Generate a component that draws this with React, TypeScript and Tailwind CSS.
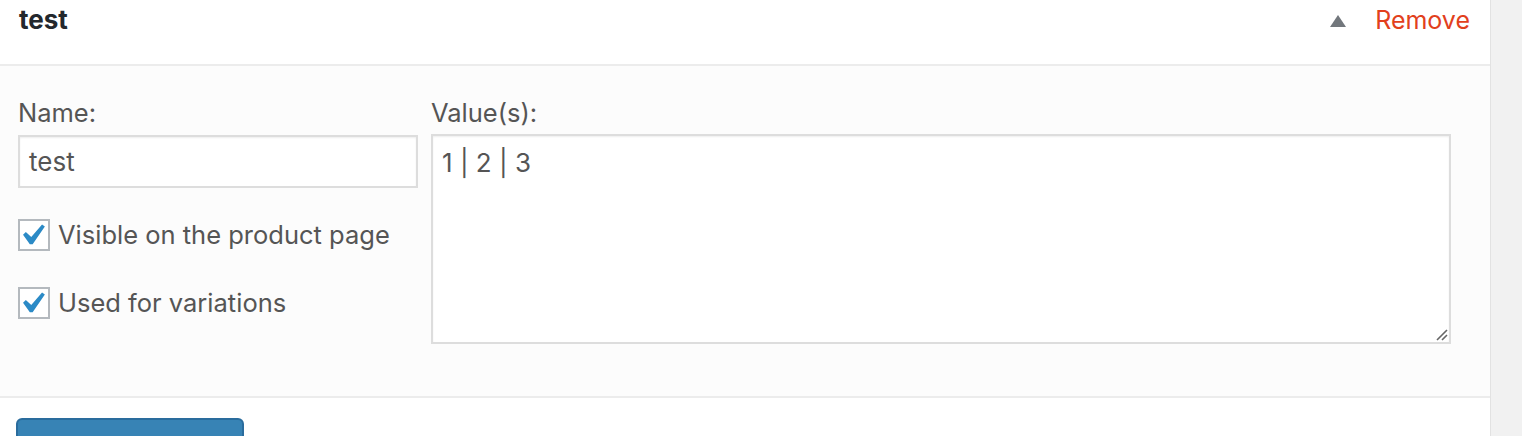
const FONT = { fontFamily: 'Inter, "Liberation Sans", sans-serif' };

// dashicons-style check mark
function Tick() {
  return (
    <svg width="24" height="21" viewBox="5.4 4.6 11.2 10" className="mb-[2px]">
      <path d="M14.83 4.89l1.34.94-5.81 8.38H9.02L5.78 9.67l1.34-1.25 2.57 2.4z" fill="#2b8ac6" />
    </svg>
  );
}

function CheckRow({ label }: { label: string }) {
  return (
    <label className="flex h-[32px] items-center gap-[8px]">
      <span className="flex h-[32px] w-[32px] shrink-0 items-center justify-center border-2 border-[#b4b9be] bg-white">
        <Tick />
      </span>
      <span className="text-[25.5px] leading-[32px] text-[#555555]">{label}</span>
    </label>
  );
}

export default function App() {
  return (
    <div className="flex h-[436px] w-[1522px] overflow-hidden bg-[#f1f1f1]" style={FONT}>
      <div className="flex w-[1491px] shrink-0 flex-col border-r border-[#e2e2e2] bg-white">
        {/* header */}
        <div className="flex h-[66px] shrink-0 items-start justify-between border-b-2 border-[#ececec] pl-[19px] pr-[20px] pt-[4px]">
          <h3 className="text-[26px] font-bold leading-[32px] text-[#23282d]">test</h3>
          <div className="flex items-center gap-[29px]">
            <span className="mt-[2px] h-0 w-0 border-x-[8px] border-b-[12px] border-x-transparent border-b-[#72777c]" />
            <a className="text-[25px] leading-[32px] text-[#e2401c]">Remove</a>
          </div>
        </div>

        {/* attribute body */}
        <div className="flex h-[332px] shrink-0 gap-[13px] border-b-2 border-[#ececec] bg-[#fcfcfc] pl-[18px] pr-[39px] pt-[32px]">
          <div className="flex w-[400px] flex-col">
            <span className="text-[25.5px] leading-[30px] text-[#555555]">Name:</span>
            <div className="mt-[7px] flex h-[53px] items-center border-2 border-[#dddddd] bg-white px-[9px] text-[26px] text-[#555555] shadow-[inset_0_1px_2px_rgba(0,0,0,0.07)]">
              test
            </div>
            <div className="mt-[31px] flex flex-col gap-[36px]">
              <CheckRow label="Visible on the product page" />
              <CheckRow label="Used for variations" />
            </div>
          </div>
          <div className="flex flex-1 flex-col">
            <span className="text-[25.5px] leading-[30px] text-[#555555]">Value(s):</span>
            <div className="relative mt-[6px] h-[210px] border-2 border-[#dddddd] bg-white px-[9px] pt-[11px] text-[26px] leading-[32px] text-[#555555] shadow-[inset_0_1px_2px_rgba(0,0,0,0.07)]">
              1 | 2 | 3
              <svg className="absolute bottom-[1px] right-[1px]" width="14" height="14" viewBox="0 0 14 14">
                <path d="M13 3 L3 13 M13 8 L8 13" stroke="#666" strokeWidth="1.6" />
              </svg>
            </div>
          </div>
        </div>

        {/* toolbar */}
        <div className="flex-1 bg-white pl-[16px] pt-[20px]">
          <button className="h-[60px] w-[228px] rounded-[6px] border-2 border-[#2a6c9d] bg-[#3783b5] pt-[6px] text-[25.5px] leading-[30px] text-white">
            Save attributes
          </button>
        </div>
      </div>
    </div>
  );
}
